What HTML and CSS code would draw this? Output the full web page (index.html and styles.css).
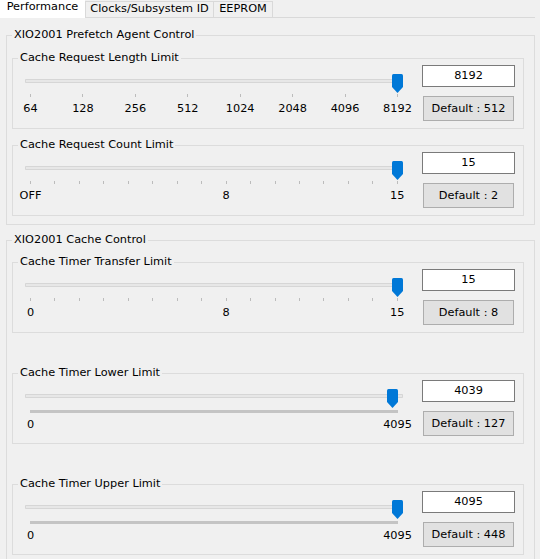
FILE: index.html
```html
<!DOCTYPE html>
<html>
<head>
<meta charset="utf-8">
<title>Performance</title>
<link rel="stylesheet" href="styles.css">
</head>
<body>
<div class="tabs">
  <div class="tab active">Performance</div>
  <div class="tab clocks">Clocks/Subsystem ID</div>
  <div class="tab eeprom">EEPROM</div>
</div>
<div class="page">
  <fieldset class="group">
    <legend>XIO2001 Prefetch Agent Control</legend>
    <fieldset class="box">
      <legend>Cache Request Length Limit</legend>
      <div class="row">
        <div class="slider">
          <div class="track"><svg class="thumb" style="left:367px" width="11" height="19" viewBox="0 0 11 19"><path d="M0 1.5Q0 0 1.5 0H9.5Q11 0 11 1.5V13L5.5 19L0 13Z"/></svg></div>
          <div class="ticks"><i></i><i></i><i></i><i></i><i></i><i></i><i></i><i></i></div>
          <div class="labels"><span>64</span><span>128</span><span>256</span><span>512</span><span>1024</span><span>2048</span><span>4096</span><span>8192</span></div>
        </div>
        <div class="side">
          <div class="value">8192</div>
          <div class="btn">Default : 512</div>
        </div>
      </div>
    </fieldset>
    <fieldset class="box near">
      <legend>Cache Request Count Limit</legend>
      <div class="row">
        <div class="slider">
          <div class="track"><svg class="thumb" style="left:367px" width="11" height="19" viewBox="0 0 11 19"><path d="M0 1.5Q0 0 1.5 0H9.5Q11 0 11 1.5V13L5.5 19L0 13Z"/></svg></div>
          <div class="ticks"><i></i><i></i><i></i><i></i><i></i><i></i><i></i><i></i><i></i><i></i><i></i><i></i><i></i><i></i><i></i><i></i></div>
          <div class="labels"><span>OFF</span><span></span><span></span><span></span><span></span><span></span><span></span><span></span><span>8</span><span></span><span></span><span></span><span></span><span></span><span></span><span>15</span></div>
        </div>
        <div class="side">
          <div class="value">15</div>
          <div class="btn">Default : 2</div>
        </div>
      </div>
    </fieldset>
  </fieldset>

  <fieldset class="group second">
    <legend>XIO2001 Cache Control</legend>
    <fieldset class="box">
      <legend>Cache Timer Transfer Limit</legend>
      <div class="row">
        <div class="slider">
          <div class="track"><svg class="thumb" style="left:367px" width="11" height="19" viewBox="0 0 11 19"><path d="M0 1.5Q0 0 1.5 0H9.5Q11 0 11 1.5V13L5.5 19L0 13Z"/></svg></div>
          <div class="ticks"><i></i><i></i><i></i><i></i><i></i><i></i><i></i><i></i><i></i><i></i><i></i><i></i><i></i><i></i><i></i><i></i></div>
          <div class="labels"><span>0</span><span></span><span></span><span></span><span></span><span></span><span></span><span></span><span>8</span><span></span><span></span><span></span><span></span><span></span><span></span><span>15</span></div>
        </div>
        <div class="side">
          <div class="value">15</div>
          <div class="btn">Default : 8</div>
        </div>
      </div>
    </fieldset>
    <fieldset class="box far">
      <legend>Cache Timer Lower Limit</legend>
      <div class="row">
        <div class="slider">
          <div class="track"><svg class="thumb" style="left:362px" width="11" height="19" viewBox="0 0 11 19"><path d="M0 1.5Q0 0 1.5 0H9.5Q11 0 11 1.5V13L5.5 19L0 13Z"/></svg></div>
          <div class="bar"></div>
          <div class="labels"><span>0</span><span>4095</span></div>
        </div>
        <div class="side">
          <div class="value">4039</div>
          <div class="btn">Default : 127</div>
        </div>
      </div>
    </fieldset>
    <fieldset class="box far">
      <legend>Cache Timer Upper Limit</legend>
      <div class="row">
        <div class="slider">
          <div class="track"><svg class="thumb" style="left:367px" width="11" height="19" viewBox="0 0 11 19"><path d="M0 1.5Q0 0 1.5 0H9.5Q11 0 11 1.5V13L5.5 19L0 13Z"/></svg></div>
          <div class="bar"></div>
          <div class="labels"><span>0</span><span>4095</span></div>
        </div>
        <div class="side">
          <div class="value">4095</div>
          <div class="btn">Default : 448</div>
        </div>
      </div>
    </fieldset>
  </fieldset>
</div>
</body>
</html>
```

FILE: styles.css
```css
html, body {
  margin: 0;
  padding: 0;
  background: #f0f0f0;
}

body {
  font-family: "DejaVu Sans", Verdana, sans-serif;
  font-size: 11.3px;
  line-height: 14px;
  color: #000;
  overflow: hidden;
}

/* ---- tab strip ---- */
.tabs {
  display: flex;
  height: 17px;
}

.tab {
  box-sizing: border-box;
  text-align: center;
  white-space: nowrap;
}

.tab.active {
  position: relative;
  width: 85px;
  height: 18px;
  background: #fff;
  line-height: 14px;
}

.tab.clocks,
.tab.eeprom {
  margin-top: 1px;
  height: 16px;
  border: 1px solid #d9d9d9;
  border-bottom: none;
  border-right: none;
  line-height: 14px;
  background: #f0f0f0;
}

.tab.clocks { width: 128px; }

.tab.eeprom {
  width: 60px;
  border-right: 1px solid #d9d9d9;
}

/* ---- tab page ---- */
.page {
  box-sizing: border-box;
  width: 535px;
  border-top: 1px solid #d9d9d9;
  padding-top: 10px;
}

fieldset {
  margin: 0;
  min-width: 0;
  border: 1px solid #dcdcdc;
}

legend {
  padding: 0 2px;
  line-height: 14px;
  white-space: nowrap;
}

.group {
  box-sizing: border-box;
  width: 529px;
  margin-left: 6px;
  padding: 9px 10px 8px 5px;
}

.group.second {
  margin-top: 8px;
  padding-top: 8px;
}

.box {
  padding: 0 8px 7px 0;
}

.box > legend {
  margin-left: 5px;
}

.box.near { margin-top: 9px; }
.box.far { margin-top: 33px; }

.row {
  display: flex;
}

/* ---- slider ---- */
.slider {
  flex: 1;
  padding-top: 14px;
}

.track {
  position: relative;
  width: 378px;
  height: 4px;
  margin-left: 12px;
  background: #e7e7e7;
  box-shadow: inset 0 0 0 1px #d6d6d6;
  border-radius: 1px;
}

.thumb {
  position: absolute;
  top: -5px;
  display: block;
  fill: #0078d7;
}

.ticks {
  display: flex;
  justify-content: space-between;
  width: 368px;
  height: 3px;
  margin: 11px 0 0 17px;
}

.ticks i {
  width: 1px;
  background: #bcbcbc;
}

.bar {
  width: 368px;
  height: 3px;
  margin: 12px 0 0 17px;
  background: #c4c4c4;
}

.labels {
  display: flex;
  justify-content: space-between;
  width: 367px;
  margin: 5px 0 0 17.5px;
}

.labels span {
  width: 0;
  display: flex;
  justify-content: center;
  white-space: nowrap;
}

/* ---- value + default button ---- */
.side {
  width: 93px;
}

.value {
  box-sizing: border-box;
  height: 22px;
  border: 1px solid #7a7a7a;
  background: #fff;
  text-align: center;
  line-height: 20px;
}

.btn {
  box-sizing: border-box;
  width: 91px;
  height: 25px;
  margin: 9px 0 0 1px;
  border: 1px solid #adadad;
  background: #e1e1e1;
  text-align: center;
  line-height: 23px;
}
```
